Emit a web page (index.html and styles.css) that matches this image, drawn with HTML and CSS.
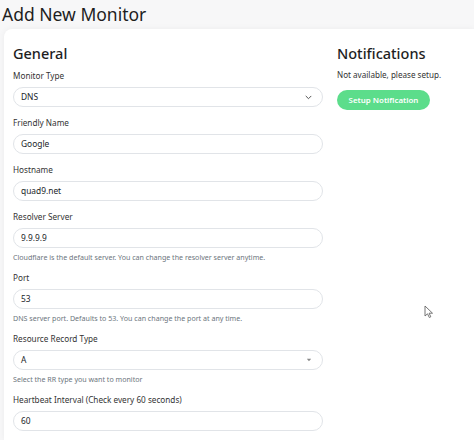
FILE: index.html
```html
<!DOCTYPE html>
<html>
<head>
<meta charset="utf-8">
<link rel="stylesheet" href="styles.css">
</head>
<body>
<h1 class="page-title">Add New Monitor</h1>
<div class="card">
  <div class="col-general">
    <h2 class="section-title">General</h2>
    <div class="field">
      <div class="label">Monitor Type</div>
      <div class="input select">
        <span>DNS</span>
        <svg class="chev" width="7" height="5" viewBox="0 0 7 5"><path d="M1 1.2 L3.5 3.7 L6 1.2" fill="none" stroke="#555" stroke-width="1" stroke-linecap="round" stroke-linejoin="round"/></svg>
      </div>
    </div>
    <div class="field">
      <div class="label">Friendly Name</div>
      <div class="input">Google</div>
    </div>
    <div class="field">
      <div class="label">Hostname</div>
      <div class="input">quad9.net</div>
    </div>
    <div class="field">
      <div class="label">Resolver Server</div>
      <div class="input">9.9.9.9</div>
      <div class="help">Cloudflare is the default server. You can change the resolver server anytime.</div>
    </div>
    <div class="field">
      <div class="label">Port</div>
      <div class="input">53</div>
      <div class="help">DNS server port. Defaults to 53. You can change the port at any time.</div>
    </div>
    <div class="field">
      <div class="label">Resource Record Type</div>
      <div class="input select">
        <span>A</span>
        <svg class="caret" width="6" height="4" viewBox="0 0 6 4"><path d="M0.8 0.8 L5.2 0.8 L3 3.3 Z" fill="#888"/></svg>
      </div>
      <div class="help">Select the RR type you want to monitor</div>
    </div>
    <div class="field">
      <div class="label">Heartbeat Interval (Check every 60 seconds)</div>
      <div class="input">60</div>
    </div>
  </div>
  <div class="col-notif">
    <h2 class="section-title">Notifications</h2>
    <p class="notif-text">Not available, please setup.</p>
    <button class="btn-green">Setup Notification</button>
  </div>
</div>
<svg class="cursor" width="10" height="14" viewBox="0 0 10 14"><path d="M1 1 L1 11 L3.5 8.8 L5.3 12.5 L6.8 11.8 L5.1 8.2 L8.5 8.2 Z" fill="#fff" stroke="#666" stroke-width="0.9" stroke-linejoin="round"/></svg>
</body>
</html>
```
FILE: styles.css
```css
html, body {
  margin: 0;
  padding: 0;
}
body {
  background: #f7f7f8;
  font-family: "Noto Sans", "Open Sans", sans-serif;
  color: #212529;
  width: 474px;
  height: 440px;
  overflow: hidden;
  position: relative;
}
.page-title {
  margin: 0;
  padding: 1px 0 0 2px;
  height: 29px;
  box-sizing: border-box;
  font-size: 17.5px;
  line-height: 26px;
  font-weight: 400;
  color: #1e1e1e;
}
.card {
  box-sizing: border-box;
  height: 411px;
  margin-left: 4px;
  background: #fff;
  border-top-left-radius: 8px;
  box-shadow: 0 0 6px rgba(0,0,0,0.05);
  padding: 14px 0 0 9px;
  display: flex;
  gap: 14px;
  overflow: hidden;
}
.col-general {
  width: 310px;
  display: flex;
  flex-direction: column;
}
.col-notif {
  display: flex;
  flex-direction: column;
  align-items: flex-start;
}
.section-title {
  margin: 0 0 6px;
  font-size: 14.5px;
  line-height: 20px;
  font-weight: 500;
  color: #1e1e1e;
}
.field {
  display: flex;
  flex-direction: column;
  margin-bottom: 9px;
}
.label {
  font-size: 8.2px;
  line-height: 14px;
  margin-bottom: 4px;
  color: #333;
}
.input {
  box-sizing: border-box;
  height: 20px;
  border: 1px solid #e1e4e8;
  border-radius: 10px;
  padding: 0 7px;
  font-size: 8.4px;
  line-height: 18px;
  color: #212529;
  display: flex;
  align-items: center;
  justify-content: space-between;
}
.help {
  font-size: 7.1px;
  line-height: 12px;
  margin-top: 3px;
  margin-bottom: -1px;
  color: #6c757d;
}
.chev {
  margin-right: 3px;
}
.caret {
  margin-right: 3px;
}
.notif-text {
  margin: 0 0 9px;
  font-size: 8.1px;
  line-height: 12px;
  color: #333;
}
.btn-green {
  height: 20px;
  width: 93px;
  border: none;
  border-radius: 10px;
  background: #5cdd8b;
  color: #fff;
  font-family: inherit;
  font-size: 7.9px;
  font-weight: 600;
  padding: 0;
}
.cursor {
  position: absolute;
  left: 424px;
  top: 305px;
}
```
